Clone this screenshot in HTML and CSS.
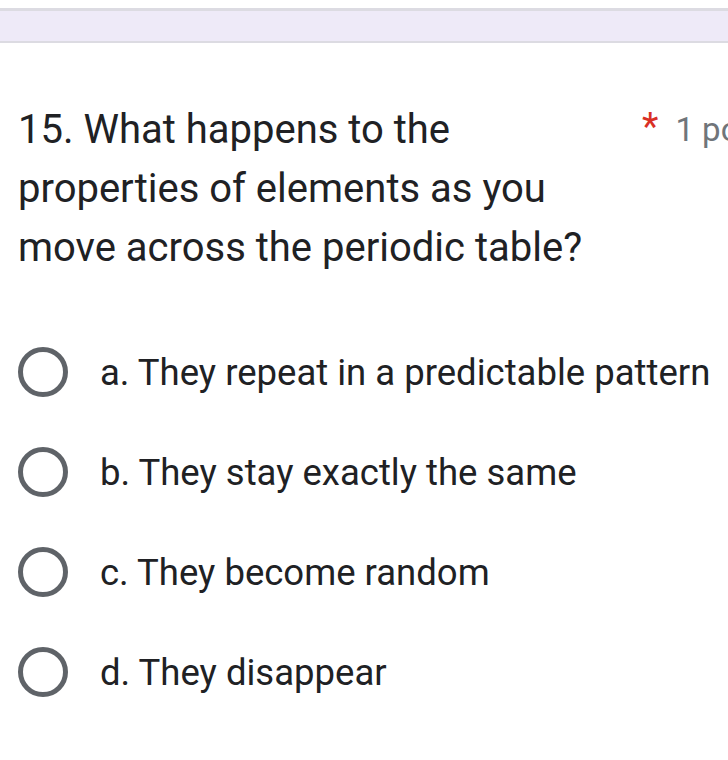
FILE: index.html
```html
<!DOCTYPE html>
<html>
<head>
<meta charset="utf-8">
<link rel="stylesheet" href="styles.css">
</head>
<body>
<div class="band"></div>
<div class="question">
  <div class="qhead">
    <div class="qtitle">15. What happens to the properties of elements as you move across the periodic table?</div>
    <div class="qmeta"><span class="req">*</span><span class="pts">1 point</span></div>
  </div>
  <div class="options">
    <div class="opt"><span class="radio"></span><span class="label">a. They repeat in a predictable pattern</span></div>
    <div class="opt"><span class="radio"></span><span class="label">b. They stay exactly the same</span></div>
    <div class="opt"><span class="radio"></span><span class="label">c. They become random</span></div>
    <div class="opt"><span class="radio"></span><span class="label">d. They disappear</span></div>
  </div>
</div>
</body>
</html>
```

FILE: styles.css
```css
html, body {
  margin: 0;
  padding: 0;
  background: #ffffff;
  overflow: hidden;
}
body {
  font-family: Roboto, "Noto Sans", sans-serif;
  color: #202124;
  width: 728px;
  height: 760px;
}
.band {
  margin-top: 8px;
  height: 30px;
  background: #eeeaf8;
  border-top: 3px solid #dcdbe2;
  border-bottom: 2px solid #dcdbe2;
}
.question {
  padding: 0 0 0 18px;
}
.qhead {
  display: flex;
  align-items: flex-start;
  margin-top: 66px;
}
.qtitle {
  flex: none;
  width: 610px;
  font-size: 40px;
  line-height: 59px;
  margin-top: -9px;
}
.qmeta {
  flex: none;
  display: flex;
  align-items: flex-start;
  white-space: nowrap;
  margin-left: 14px;
}
.req {
  color: #d93025;
  font-size: 38px;
  line-height: 36px;
}
.pts {
  color: #70757a;
  font-size: 33px;
  line-height: 36px;
  margin-left: 17px;
  margin-top: 3px;
}
.options {
  display: flex;
  flex-direction: column;
  margin-top: 45px;
}
.opt {
  display: flex;
  align-items: center;
  height: 100px;
}
.radio {
  box-sizing: border-box;
  width: 50px;
  height: 50px;
  border: 5px solid #5f6368;
  border-radius: 50%;
  flex: none;
}
.label {
  margin-left: 32px;
  font-size: 36.5px;
}
```
